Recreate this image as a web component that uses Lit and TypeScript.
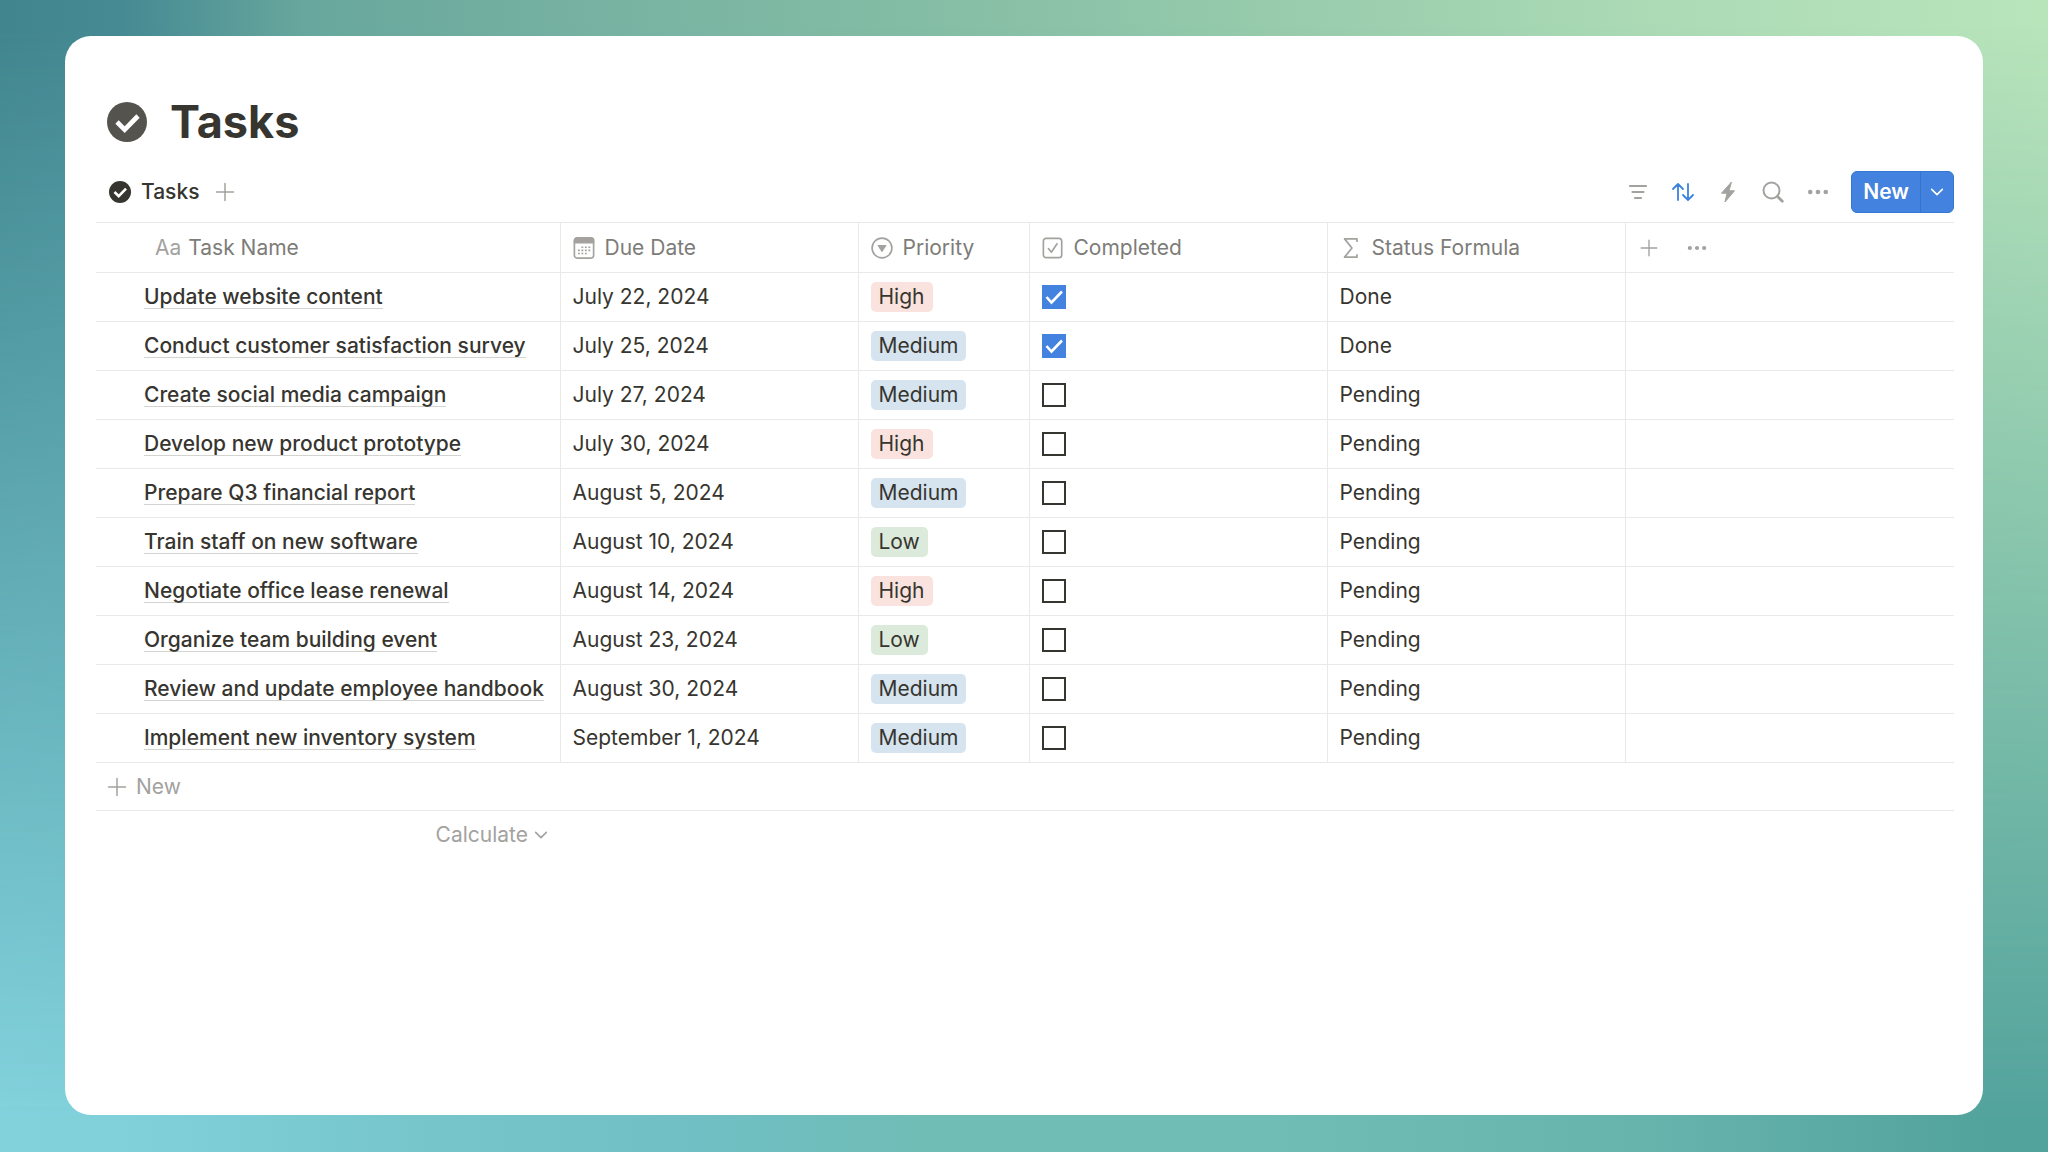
import { LitElement, html, css, svg } from "lit";
import { customElement, property } from "lit/decorators.js";

type Priority = "High" | "Medium" | "Low";
interface Task {
  name: string;
  due: string;
  priority: Priority;
  done: boolean;
}

const TASKS: Task[] = [
  { name: "Update website content", due: "July 22, 2024", priority: "High", done: true },
  { name: "Conduct customer satisfaction survey", due: "July 25, 2024", priority: "Medium", done: true },
  { name: "Create social media campaign", due: "July 27, 2024", priority: "Medium", done: false },
  { name: "Develop new product prototype", due: "July 30, 2024", priority: "High", done: false },
  { name: "Prepare Q3 financial report", due: "August 5, 2024", priority: "Medium", done: false },
  { name: "Train staff on new software", due: "August 10, 2024", priority: "Low", done: false },
  { name: "Negotiate office lease renewal", due: "August 14, 2024", priority: "High", done: false },
  { name: "Organize team building event", due: "August 23, 2024", priority: "Low", done: false },
  { name: "Review and update employee handbook", due: "August 30, 2024", priority: "Medium", done: false },
  { name: "Implement new inventory system", due: "September 1, 2024", priority: "Medium", done: false },
];

// All icons share a 24-unit box.
const ICONS = {
  check: svg`<circle cx="12" cy="12" r="12" fill="currentColor"/><path d="M6 12l4.600 4.600L18.600 8.400" fill="none" stroke="#fff" stroke-width="2.800"/>`,
  plus: svg`<path d="M12 3.500v17M3.500 12h17" fill="none" stroke="currentColor" stroke-width="1.500" stroke-linecap="round"/>`,
  filter: svg`<path d="M4 6h16M6.500 12h11M9 18h6" fill="none" stroke="currentColor" stroke-width="2.200" stroke-linecap="round"/>`,
  sort: svg`<path d="M7 20V4M2 9l5-5 5 5M17 4v16M12 15l5 5 5-5" fill="none" stroke="currentColor" stroke-width="1.800" stroke-linecap="round" stroke-linejoin="round"/>`,
  bolt: svg`<path d="M15.500 2L5.500 13.200h5.500L9 22 18.500 10.800h-5.500z" fill="currentColor" stroke="currentColor" stroke-width="1" stroke-linejoin="round"/>`,
  search: svg`<circle cx="10.500" cy="10.500" r="8" fill="none" stroke="currentColor" stroke-width="2"/><path d="M16.500 16.500l4.800 4.800" fill="none" stroke="currentColor" stroke-width="2.800" stroke-linecap="round"/>`,
  dots: svg`<circle cx="4.200" cy="12" r="2.300" fill="currentColor"/><circle cx="12" cy="12" r="2.300" fill="currentColor"/><circle cx="19.800" cy="12" r="2.300" fill="currentColor"/>`,
  down: svg`<path d="M4 8l8 8 8-8" fill="none" stroke="currentColor" stroke-width="2.400" stroke-linecap="round" stroke-linejoin="round"/>`,
  calendar: svg`<rect x="1.500" y="1" width="21" height="22" rx="3" fill="none" stroke="currentColor" stroke-width="1.800"/><path d="M.8 7V4A3.500 3.500 0 0 1 4.300.500h15.400A3.500 3.500 0 0 1 23.200 4v3z" fill="currentColor"/><path d="M9.200 11.200h2M13 11.200h2M16.800 11.200h2M5.400 14.600h2M9.200 14.600h2M13 14.600h2M16.800 14.600h2M5.400 18h2M9.200 18h2M13 18h2" fill="none" stroke="currentColor" stroke-width="1.800"/>`,
  select: svg`<circle cx="12" cy="12" r="10.800" fill="none" stroke="currentColor" stroke-width="1.800"/><path d="M7.800 8.600h8.400a.6.600 0 0 1 .5.900l-4.200 6.700a.6.600 0 0 1-1 0L7.300 9.500a.6.600 0 0 1 .5-.9z" fill="currentColor"/>`,
  checkbox: svg`<rect x="1.500" y="1.500" width="20" height="21" rx="3" fill="none" stroke="currentColor" stroke-width="1.800"/><path d="M7 12.600l3.200 4L16.400 7.400" fill="none" stroke="currentColor" stroke-width="1.800" stroke-linecap="round" stroke-linejoin="round"/>`,
  sigma: svg`<path d="M18.500 4.500V2h-13.500l8 10-8 10h13.500V19.500" fill="none" stroke="currentColor" stroke-width="1.900" stroke-linecap="round" stroke-linejoin="round"/>`,
};
type IconName = keyof typeof ICONS;

@customElement("ui-icon")
class UiIcon extends LitElement {
  @property() name: IconName = "plus";
  static styles = css`
    :host { display: inline-flex; flex: none; width: 22px; height: 22px; }
    svg { width: 100%; height: 100%; overflow: visible; }
  `;
  render() {
    return html`<svg viewBox="0 0 24 24" aria-hidden="true">${ICONS[this.name]}</svg>`;
  }
}

@customElement("app-root")
class AppRoot extends LitElement {
  static styles = css`
    :host {
      display: block;
      font-family: Inter, "Liberation Sans", sans-serif;
      font-size: 21px;
      line-height: 28px;
      color: #37352f;
    }
    * { box-sizing: border-box; }
    button { font: inherit; color: inherit; background: none; border: 0; padding: 0; cursor: pointer; display: inline-flex; align-items: center; }
    .page {
      position: relative;
      isolation: isolate;
      min-height: 100vh;
      padding: 36px 65px 37px;
      display: flex;
      background: linear-gradient(90deg, #41868e 0%, #468a93 6%, #68a79d 15%, #78b3a2 30%, #84bda5 45%, #97cbac 62%, #abdab5 80%, #b9e5bb 100%);
    }
    /* The lower colours fade in over the upper ones down the page. */
    .page::before {
      content: "";
      position: absolute;
      inset: 0;
      z-index: -1;
      background: linear-gradient(90deg, #82d2dc 0%, #80d0da 7%, #76c6cc 20%, #70bfc4 34%, #70bdb6 45%, #70bdb5 62%, #67b4ad 80%, #53a39d 97%);
      mask-image: linear-gradient(180deg, transparent 2%, #000 97%);
    }
    .card { flex: 1; min-width: 0; background: #fff; border-radius: 26px; padding: 62px 29px 32px 31px; }
    .title { display: flex; align-items: center; gap: 23px; margin: 0; padding-left: 11px; font-size: 45px; line-height: 48px; font-weight: 700; }
    .title ui-icon { width: 40px; height: 40px; color: #55534e; }
    .bar { display: flex; align-items: center; justify-content: space-between; height: 42px; margin: 25px 0 9px; }
    .views, .tools { display: flex; align-items: center; }
    .views { padding-left: 13px; gap: 14px; }
    .view { gap: 10px; font-weight: 500; }
    .muted { color: #a3a29f; }
    .tools { gap: 21px; color: #a3a29f; }
    .bar .tools > button ui-icon, .views .muted ui-icon, .new ui-icon { width: 24px; height: 24px; }
    .tools .blue { color: #3b82dc; }
    .split { display: flex; height: 42px; border-radius: 6px; overflow: hidden; background: #4382de; color: #fff; font-weight: 600; border: 1px solid #3576d2; }
    .split button { padding: 0 11px; }
    .split .more { padding: 0 8px; border-left: 1px solid #3674cc; }
    .split ui-icon, .calc ui-icon { width: 16px; height: 16px; }
    table { width: 100%; table-layout: fixed; border-collapse: collapse; }
    th, td { height: 49px; padding: 0 12px; text-align: left; font-weight: 400; border: 1px solid #e9e9e7; white-space: nowrap; }
    th { height: 50px; color: #7d7c78; }
    tr > :first-child { border-left: 0; padding-left: 48px; }
    tr > :last-child { border-right: 0; }
    .head { display: flex; align-items: center; gap: 10px; }
    .head ui-icon { color: #a3a29f; }
    .first { padding-left: 11px; gap: 7px; }
    .actions { gap: 26px; }
    .c1 { width: 464px; }
    .c2, .c4, .c5 { width: 298px; }
    .c3 { width: 171px; }
    .name { display: inline-block; line-height: 23px; color: inherit; font-weight: 500; text-decoration: none; border-bottom: 1px solid #d3d3d0; }
    .tag { display: inline-block; padding: 1px 8px; border-radius: 5px; }
    .High { background: #fae3de; }
    .Medium { background: #d5e4ef; }
    .Low { background: #dbeadb; }
    .box { appearance: none; display: block; width: 24px; height: 24px; margin: 0; border: 2px solid #37352f; }
    .box:checked { border: 0; background: #4382de; }
    .cell { display: grid; width: 24px; }
    .cell > * { grid-area: 1 / 1; }
    .tick { width: 24px; height: 24px; pointer-events: none; color: #fff; }
    .new { width: 100%; height: 48px; padding-left: 9px; gap: 7px; border-bottom: 1px solid #e9e9e7; }
    .calc { display: flex; width: 464px; justify-content: flex-end; padding: 10px 11px 0 0; }
    .calc button { gap: 5px; }
  `;

  private row(task: Task) {
    return html`<tr>
      <td><a class="name" href="#">${task.name}</a></td>
      <td>${task.due}</td>
      <td><span class="tag ${task.priority}">${task.priority}</span></td>
      <td>
        <div class="cell">
          <input class="box" type="checkbox" aria-label="${task.name}" .checked=${task.done} />
          ${task.done
            ? html`<svg class="tick" viewBox="0 0 24 24" aria-hidden="true"><path d="M4.500 12l5 5.500L20 6.500" fill="none" stroke="currentColor" stroke-width="2.600" /></svg>`
            : null}
        </div>
      </td>
      <td>${task.done ? "Done" : "Pending"}</td>
      <td></td>
    </tr>`;
  }

  render() {
    return html`
      <div class="page">
        <main class="card">
          <h1 class="title"><ui-icon name="check"></ui-icon>Tasks</h1>
          <div class="bar">
            <div class="views">
              <button class="view"><ui-icon name="check"></ui-icon>Tasks</button>
              <button class="muted" aria-label="Add view"><ui-icon name="plus"></ui-icon></button>
            </div>
            <div class="tools">
              <button aria-label="Filter"><ui-icon name="filter"></ui-icon></button>
              <button class="blue" aria-label="Sort"><ui-icon name="sort"></ui-icon></button>
              <button aria-label="Automations"><ui-icon name="bolt"></ui-icon></button>
              <button aria-label="Search"><ui-icon name="search"></ui-icon></button>
              <button aria-label="More"><ui-icon name="dots"></ui-icon></button>
              <div class="split">
                <button>New</button>
                <button class="more" aria-label="New options"><ui-icon name="down"></ui-icon></button>
              </div>
            </div>
          </div>
          <table>
            <colgroup><col class="c1" /><col class="c2" /><col class="c3" /><col class="c4" /><col class="c5" /><col /></colgroup>
            <thead>
              <tr>
                <th><div class="head first"><span class="muted">Aa</span>Task Name</div></th>
                <th><div class="head"><ui-icon name="calendar"></ui-icon>Due Date</div></th>
                <th><div class="head"><ui-icon name="select"></ui-icon>Priority</div></th>
                <th><div class="head"><ui-icon name="checkbox"></ui-icon>Completed</div></th>
                <th><div class="head"><ui-icon name="sigma"></ui-icon>Status Formula</div></th>
                <th>
                  <div class="head actions">
                    <button aria-label="Add property"><ui-icon name="plus"></ui-icon></button>
                    <button aria-label="Properties"><ui-icon name="dots"></ui-icon></button>
                  </div>
                </th>
              </tr>
            </thead>
            <tbody>${TASKS.map((t) => this.row(t))}</tbody>
          </table>
          <button class="new muted"><ui-icon name="plus"></ui-icon>New</button>
          <div class="calc muted"><button>Calculate<ui-icon name="down"></ui-icon></button></div>
        </main>
      </div>
    `;
  }
}
